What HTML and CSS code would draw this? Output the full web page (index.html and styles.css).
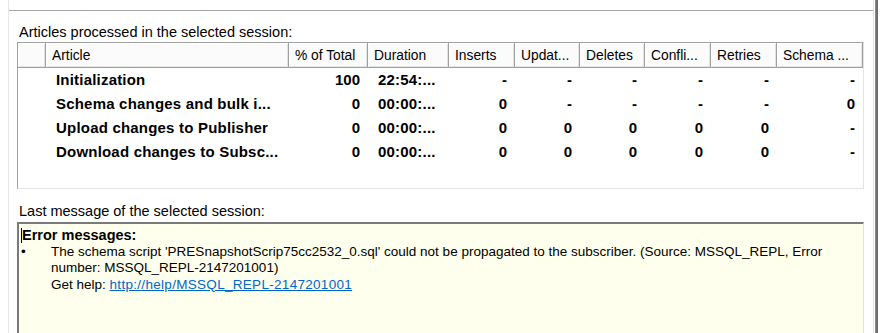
FILE: index.html
```html
<!DOCTYPE html>
<html>
<head>
<meta charset="utf-8">
<link rel="stylesheet" href="styles.css">
</head>
<body>
<div class="page">
  <div class="outer">
    <div class="topline"></div>
    <div class="label label-articles">Articles processed in the selected session:</div>
    <div class="grid">
      <table class="tbl">
        <colgroup>
          <col class="c-rh"><col class="c-article"><col class="c-pct"><col class="c-dur"><col class="c-ins"><col class="c-upd"><col class="c-del"><col class="c-con"><col class="c-ret"><col class="c-sch">
        </colgroup>
        <thead>
          <tr>
            <th></th>
            <th>Article</th>
            <th>% of Total</th>
            <th>Duration</th>
            <th>Inserts</th>
            <th>Updat...</th>
            <th>Deletes</th>
            <th>Confli...</th>
            <th>Retries</th>
            <th>Schema ...</th>
          </tr>
        </thead>
        <tbody>
          <tr>
            <td></td><td class="l">Initialization</td><td>100</td><td class="l">22:54:...</td><td>-</td><td>-</td><td>-</td><td>-</td><td>-</td><td>-</td>
          </tr>
          <tr>
            <td></td><td class="l">Schema changes and bulk i...</td><td>0</td><td class="l">00:00:...</td><td>0</td><td>-</td><td>-</td><td>-</td><td>-</td><td>0</td>
          </tr>
          <tr>
            <td></td><td class="l">Upload changes to Publisher</td><td>0</td><td class="l">00:00:...</td><td>0</td><td>0</td><td>0</td><td>0</td><td>0</td><td>-</td>
          </tr>
          <tr>
            <td></td><td class="l">Download changes to Subsc...</td><td>0</td><td class="l">00:00:...</td><td>0</td><td>0</td><td>0</td><td>0</td><td>0</td><td>-</td>
          </tr>
        </tbody>
      </table>
    </div>
    <div class="label label-last">Last message of the selected session:</div>
    <div class="msgbox">
      <div class="msg-title"><span class="caret"></span>Error messages:</div>
      <div class="msg-item">
        <span class="bullet">•</span>
        <div class="msg-text">The schema script 'PRESnapshotScrip75cc2532_0.sql' could not be propagated to the subscriber. (Source: MSSQL_REPL, Error number: MSSQL_REPL-2147201001)<br>Get help: <a class="link" href="#">http://help/MSSQL_REPL-2147201001</a></div>
      </div>
    </div>
  </div>
  <div class="bar"></div>
</div>
</body>
</html>
```
FILE: styles.css
```css
html, body {
  margin: 0;
  padding: 0;
  background: #ffffff;
}
body {
  width: 884px;
  height: 333px;
  overflow: hidden;
  font-family: "Liberation Sans", Arial, sans-serif;
  color: #000;
}
.page {
  display: flex;
  height: 333px;
}
.outer {
  margin-left: 8px;
  width: 866px;
  border-left: 1px solid #e6e6e6;
  border-right: 1px solid #e3e3e3;
  padding-left: 8px;
  box-sizing: border-box;
  display: flex;
  flex-direction: column;
}
.topline {
  height: 10px;
  flex: none;
  margin-left: -8px;
  border-bottom: 1px solid #a6a6a6;
}
.bar {
  margin-left: 1px;
  width: 3px;
  flex: none;
  background: #6f6f6f;
  box-shadow: inset 1px 0 0 #8a8a8a;
}
.label {
  font-size: 14.5px;
  line-height: 16px;
  padding-left: 2px;
  white-space: nowrap;
}
.label-articles {
  margin-top: 13px;
  margin-bottom: 2px;
}
.label-last {
  margin-top: 14px;
  margin-bottom: 3px;
}
.grid {
  width: 847px;
  height: 147px;
  box-sizing: border-box;
  border-top: 1px solid #a0a0a0;
  border-left: 1px solid #a0a0a0;
  border-right: 1px solid #e3e3e3;
  border-bottom: 1px solid #e3e3e3;
  background: #fff;
  overflow: hidden;
  flex: none;
}
.tbl {
  table-layout: fixed;
  border-collapse: separate;
  border-spacing: 0;
  width: 845px;
}
.c-rh { width: 28px; }
.c-article { width: 243px; }
.c-pct { width: 79px; }
.c-dur { width: 81px; }
.c-ins { width: 66px; }
.c-upd { width: 65px; }
.c-del { width: 65px; }
.c-con { width: 66px; }
.c-ret { width: 66px; }
.c-sch { width: 86px; }
.tbl th {
  height: 25px;
  box-sizing: border-box;
  padding: 0 0 0 6px;
  font-weight: normal;
  font-size: 13.8px;
  text-align: left;
  white-space: nowrap;
  overflow: hidden;
  background: #fbfbfb;
  border-right: 1px solid #a0a0a0;
  border-bottom: 1px solid #a0a0a0;
  box-shadow: inset 1px 1px 0 #ffffff, inset -1px -1px 0 #e3e3e3;
}
.tbl td {
  height: 24px;
  padding: 0 8px 0 0;
  font-weight: bold;
  font-size: 15px;
  line-height: 22px;
  text-align: right;
  white-space: nowrap;
  overflow: hidden;
}
.tbl td.l {
  text-align: left;
  padding: 0 0 0 10px;
  letter-spacing: 0.2px;
}
.msgbox {
  width: 847px;
  flex: 1;
  box-sizing: border-box;
  background: #ffffee;
  border-top: 2px solid #7a7a7a;
  border-left: 2px solid #7a7a7a;
  border-right: 1px solid #e3e3e3;
  padding: 3px 0 0 2px;
  font-size: 13.5px;
  line-height: 16.5px;
}
.msg-title {
  font-weight: bold;
  font-size: 14.5px;
  display: flex;
  align-items: center;
}
.caret {
  display: inline-block;
  width: 1px;
  height: 15px;
  background: #000;
}
.msg-item {
  display: flex;
}
.bullet {
  width: 30px;
  flex: none;
}
.msg-text {
  width: 800px;
}
.link {
  color: #0066cc;
  text-decoration: underline;
  letter-spacing: 0.3px;
}
```
